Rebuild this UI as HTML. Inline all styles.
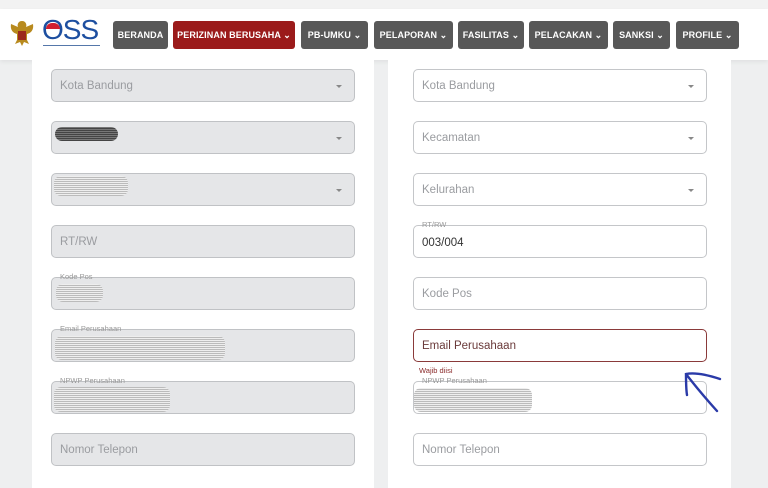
<!DOCTYPE html>
<html><head><meta charset="utf-8"><style>
*{box-sizing:border-box;margin:0;padding:0}
body{width:768px;height:488px;overflow:hidden;background:#eeeff0;font-family:"Liberation Sans",sans-serif;position:relative}
.top{position:absolute;left:0;top:0;width:768px;height:9px;background:#f2f2f2}
.hdr{position:absolute;left:0;top:9px;width:768px;height:51px;background:#fff;box-shadow:0 2px 4px rgba(0,0,0,.06)}
.btn{position:absolute;top:21px;height:28px;background:#585858;color:#fff;font-size:9px;font-weight:bold;border-radius:3px;display:flex;align-items:center;justify-content:center;letter-spacing:.1px}
.red{background:#9b1b1b}
.panel{position:absolute;top:60px;height:428px;background:#fff}
.f{position:absolute;height:33px;border:1px solid #c4c6c9;border-radius:5px;font-size:11.5px;color:#9a9ca0;padding-left:8px;display:flex;align-items:center}
.l{left:51px;width:304px;background:#e5e6e8;border-color:#c0c2c5}
.r{left:413px;width:294px;background:#fff}
.arr{position:absolute;right:12px;top:15px;width:0;height:0;border-left:3px solid transparent;border-right:3px solid transparent;border-top:3px solid #888}
.lab{position:absolute;left:6px;top:-5px;font-size:7.5px;color:#999;padding:0 2px;line-height:8px}
.scr{position:absolute;height:14px;border-radius:7px;background:repeating-linear-gradient(0deg,#bbb 0 1px,#eee 1px 2px)}
</style></head><body>
<div class="top"></div>
<div class="hdr"></div>
<svg style="position:absolute;left:8px;top:18px" width="28" height="32" viewBox="0 0 28 32"><path d="M14 3 C10 3 9 7 10 9 L3 6 C2 12 5 15 9 16 L9 22 L7 26 L12 24 L14 28 L16 24 L21 26 L19 22 L19 16 C23 15 26 12 25 6 L18 9 C19 7 18 3 14 3Z" fill="#b88a1e"/><rect x="10" y="13" width="8" height="9" fill="#9b2a1e"/></svg>
<div style="position:absolute;left:42px;top:14px;font-size:28px;color:#1d4fa0;letter-spacing:-1px">OSS</div>
<div style="position:absolute;left:46px;top:23px;width:14px;height:6px;background:#d02030;border-radius:7px 7px 0 0"></div>
<div style="position:absolute;left:43px;top:45px;width:57px;height:1px;background:#5577aa"></div>
<div class="btn" style="left:113px;width:55px">BERANDA</div>
<div class="btn red" style="left:173px;width:122px">PERIZINAN BERUSAHA ⌄</div>
<div class="btn" style="left:301px;width:67px">PB-UMKU ⌄</div>
<div class="btn" style="left:374px;width:79px">PELAPORAN ⌄</div>
<div class="btn" style="left:458px;width:66px">FASILITAS ⌄</div>
<div class="btn" style="left:529px;width:79px">PELACAKAN ⌄</div>
<div class="btn" style="left:613px;width:57px">SANKSI ⌄</div>
<div class="btn" style="left:676px;width:63px">PROFILE ⌄</div>

<div class="panel" style="left:32px;width:342px"></div>
<div class="panel" style="left:388px;width:343px"></div>

<div class="f l" style="top:69px">Kota Bandung<div class="arr"></div></div>
<div class="f l" style="top:121px"><div class="scr" style="left:3px;top:5px;width:63px;background:repeating-linear-gradient(0deg,#444 0 1px,#777 1px 2px)"></div><div class="arr"></div></div>
<div class="f l" style="top:173px"><div class="scr" style="left:2px;top:2px;width:74px;height:20px"></div><div class="arr"></div></div>
<div class="f l" style="top:225px">RT/RW</div>
<div class="f l" style="top:277px"><span class="lab">Kode Pos</span><div class="scr" style="left:4px;top:6px;width:47px;height:18px"></div></div>
<div class="f l" style="top:329px"><span class="lab">Email Perusahaan</span><div class="scr" style="left:3px;top:6px;width:170px;height:24px"></div></div>
<div class="f l" style="top:381px"><span class="lab">NPWP Perusahaan</span><div class="scr" style="left:2px;top:5px;width:116px;height:25px"></div></div>
<div class="f l" style="top:433px">Nomor Telepon</div>

<div class="f r" style="top:69px">Kota Bandung<div class="arr"></div></div>
<div class="f r" style="top:121px">Kecamatan<div class="arr"></div></div>
<div class="f r" style="top:173px">Kelurahan<div class="arr"></div></div>
<div class="f r" style="top:225px;color:#333;padding-top:2px"><span class="lab">RT/RW</span>003/004</div>
<div class="f r" style="top:277px">Kode Pos</div>
<div class="f r" style="top:329px;border-color:#8a3a3a;color:#6a3a3a">Email Perusahaan</div>
<div style="position:absolute;left:419px;top:366px;font-size:7.5px;color:#8a2a2a">Wajib diisi</div>
<div class="f r" style="top:381px"><span class="lab">NPWP Perusahaan</span><div class="scr" style="left:0;top:6px;width:118px;height:24px"></div></div>
<div class="f r" style="top:433px">Nomor Telepon</div>

<svg style="position:absolute;left:680px;top:365px" width="45" height="50" viewBox="0 0 45 50"><path d="M7 30 C6 24 6 16 6 9 C16 7 28 10 40 14 M6 9 C16 22 28 36 37 46" fill="none" stroke="#2a3aa8" stroke-width="2.4" stroke-linecap="round"/></svg>
</body></html>
